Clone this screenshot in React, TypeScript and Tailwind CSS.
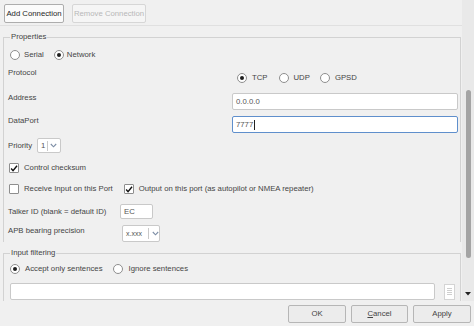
import React from "react";

const Radio = ({ checked }: { checked?: boolean }) => (
  <span className="w-[10px] h-[10px] shrink-0 rounded-full border border-[#8e8e8e] bg-white flex items-center justify-center">
    {checked && <span className="w-[4px] h-[4px] rounded-full bg-[#1e1e1e]" />}
  </span>
);

const Check = ({ checked }: { checked?: boolean }) => (
  <span className="w-[10px] h-[10px] shrink-0 rounded-[1px] border border-[#8e8e8e] bg-white flex items-center justify-center">
    {checked && (
      <svg width="9" height="9" viewBox="0 0 9 9">
        <path d="M1.3 4.6 L3.4 6.9 L7.9 1.4" fill="none" stroke="#111" strokeWidth="1.6" />
      </svg>
    )}
  </span>
);

const Chevron = () => (
  <svg width="7" height="5" viewBox="0 0 7 5">
    <path d="M0.8 1 L3.5 3.8 L6.2 1" fill="none" stroke="#7d8ea6" strokeWidth="1.1" />
  </svg>
);

export default function App() {
  return (
    <div
      className="w-[474px] h-[326px] bg-[#f0f0f0] flex flex-col overflow-hidden text-[7.75px] leading-[10px] text-[#454545]"
      style={{ fontFamily: '"Liberation Sans", Arial, sans-serif' }}
    >
      <div className="flex h-[301px]">
        <div className="w-[462px] flex flex-col overflow-hidden">
          <div className="h-[26px] shrink-0 border-b border-[#e0e0e0] flex items-start pt-[4px] pl-[4px] gap-[8px]">
            <div className="w-[60px] h-[19px] flex items-center justify-center border border-[#adadad] rounded-[2px] bg-[#fbfbfb] text-[#262626]">
              Add Connection
            </div>
            <div className="w-[74px] h-[19px] flex items-center justify-center border border-[#d6d6d6] rounded-[2px] bg-[#f5f5f5] text-[#b8b8b8]">
              Remove Connection
            </div>
          </div>

          <fieldset className="ml-[3px] w-[458px] mt-[6px] border border-b-0 border-[#d2d2d2] pl-[4px] pr-[1px] shrink-0">
            <legend className="ml-[2px] px-[1px] leading-[10px] text-[#444]">Properties</legend>

            <div className="mt-[6px] h-[14px] flex items-center pl-[2px]">
              <Radio />
              <span className="ml-[4px]">Serial</span>
              <span className="ml-[10px]"><Radio checked /></span>
              <span className="ml-[3px]">Network</span>
            </div>

            <div className="mt-[4px] h-[24px] flex">
              <span className="w-[224px] pt-[2px]">Protocol</span>
              <div className="flex items-center ml-[5px]">
                <Radio checked />
                <span className="ml-[5px]">TCP</span>
                <span className="ml-[11px]"><Radio /></span>
                <span className="ml-[5px]">UDP</span>
                <span className="ml-[10px]"><Radio /></span>
                <span className="ml-[5px]">GPSD</span>
              </div>
            </div>

            <div className="mt-[3px] h-[17px] flex">
              <span className="w-[224px]">Address</span>
              <div className="w-[226px] h-[17px] bg-white border border-[#c9c9c9] rounded-[2px] flex items-center pl-[3px] text-[#555]">
                0.0.0.0
              </div>
            </div>

            <div className="mt-[6px] h-[17px] flex">
              <span className="w-[224px]">DataPort</span>
              <div className="w-[226px] h-[17px] bg-white border border-[#5f8fcc] rounded-[2px] flex items-center pl-[3px] text-[#555]">
                7777<span className="w-px h-[10px] bg-[#222] ml-[1px]" />
              </div>
            </div>

            <div className="mt-[5px] h-[15px] flex items-center">
              <span className="w-[29px]">Priority</span>
              <div className="w-[24px] h-[15px] bg-white border border-[#c9c9c9] rounded-[2px] flex items-center text-[#555]">
                <span className="w-[9px] pl-[3px]">1</span>
                <span className="w-px h-[10px] bg-[#c9c9c9]" />
                <span className="ml-[2px] flex"><Chevron /></span>
              </div>
            </div>

            <div className="mt-[10px] h-[10px] flex items-center pl-[1px]">
              <Check checked />
              <span className="ml-[5px]">Control checksum</span>
            </div>

            <div className="mt-[11px] h-[10px] flex items-center pl-[1px]">
              <Check />
              <span className="ml-[5px]">Receive Input on this Port</span>
              <span className="ml-[11px]"><Check checked /></span>
              <span className="ml-[5px]">Output on this port (as autopilot or NMEA repeater)</span>
            </div>

            <div className="mt-[10px] h-[15px] flex items-center">
              <span className="w-[112px]">Talker ID (blank = default ID)</span>
              <div className="w-[33px] h-[15px] bg-white border border-[#c9c9c9] rounded-[2px] flex items-center pl-[3px] text-[#555]">
                EC
              </div>
            </div>

            <div className="mt-[6px] h-[17px] flex">
              <span className="w-[114px] pt-[1px]">APB bearing precision</span>
              <div className="w-[38px] h-[17px] bg-white border border-[#c9c9c9] rounded-[2px] flex items-center text-[#555]">
                <span className="w-[25px] pl-[3px] text-[7px]">x.xxx</span>
                <span className="w-px h-[11px] bg-[#c9c9c9]" />
                <span className="ml-[3px] flex"><Chevron /></span>
              </div>
            </div>
          </fieldset>

          <fieldset className="ml-[3px] w-[458px] mt-[6px] border border-b-0 border-[#d2d2d2] pl-[4px] pr-[1px] shrink-0">
            <legend className="ml-[2px] px-[1px] leading-[10px] text-[#444]">Input filtering</legend>
            <div className="mt-[5px] h-[12px] flex items-center pl-[2px]">
              <Radio checked />
              <span className="ml-[5px]">Accept only sentences</span>
              <span className="ml-[10px]"><Radio /></span>
              <span className="ml-[6px]">Ignore sentences</span>
            </div>
            <div className="mt-[8px] h-[17px] flex items-center pl-[2px]">
              <div className="w-[425px] h-[17px] bg-white border border-[#c9c9c9] rounded-[2px]" />
              <div className="ml-[9px] w-[11px] h-[16px] bg-white border border-[#d4d4d4] flex flex-col items-center justify-center gap-[1px]">
                <span className="w-[5px] h-px bg-[#cfcfcf]" />
                <span className="w-[5px] h-px bg-[#cfcfcf]" />
                <span className="w-[5px] h-px bg-[#cfcfcf]" />
                <span className="w-[5px] h-px bg-[#cfcfcf]" />
              </div>
            </div>
            <div className="h-[20px]" />
          </fieldset>
        </div>

        <div className="w-[12px] bg-[#e9e9e9] flex flex-col items-center">
          <div className="h-[90px]" />
          <div className="w-[5px] h-[168px] rounded-[3px] bg-[#a4a4a4]" />
          <div className="flex-1" />
          <svg width="6" height="4" viewBox="0 0 6 4" className="mb-[5px]">
            <path d="M0 0 L6 0 L3 3.5 Z" fill="#222" />
          </svg>
        </div>
      </div>

      <div className="flex justify-end pt-[4px] pr-[3px] gap-[5px]">
        <div className="w-[58px] h-[18px] flex items-center justify-center border border-[#b6b6b6] rounded-[2px] bg-[#ececec] text-[#444]">
          OK
        </div>
        <div className="w-[57px] h-[18px] flex items-center justify-center border border-[#b6b6b6] rounded-[2px] bg-[#ececec] text-[#444]">
          <span><span className="underline">C</span>ancel</span>
        </div>
        <div className="w-[58px] h-[18px] flex items-center justify-center border border-[#b6b6b6] rounded-[2px] bg-[#ececec] text-[#444]">
          Apply
        </div>
      </div>
    </div>
  );
}
